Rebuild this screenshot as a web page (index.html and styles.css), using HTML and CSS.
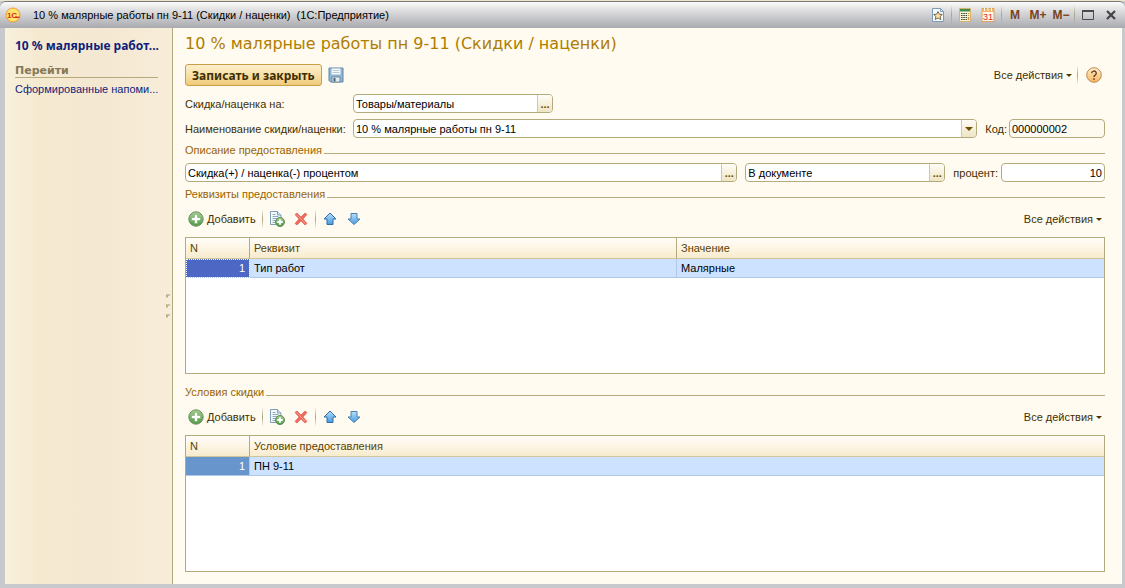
FILE: index.html
```html
<!DOCTYPE html>
<html lang="ru">
<head>
    <meta charset="UTF-8">
    <meta name="viewport" content="width=device-width, initial-scale=1.0">
    <title>10 % малярные работы пн 9-11 (Скидки / наценки)</title>
    <link rel="stylesheet" href="styles.css">
</head>
<body>

    <!-- shared icons -->
    <svg class="sprite" aria-hidden="true">
        <defs>
            <linearGradient id="green" x1="0" y1="0" x2="0" y2="1">
                <stop offset="0" stop-color="#a5cf93"/>
                <stop offset="1" stop-color="#4c9a45"/>
            </linearGradient>
            <linearGradient id="blue" x1="0" y1="0" x2="0" y2="1">
                <stop offset="0" stop-color="#b4e0fb"/>
                <stop offset="1" stop-color="#4a9ade"/>
            </linearGradient>
            <linearGradient id="orange" x1="0" y1="0" x2="0" y2="1">
                <stop offset="0" stop-color="#fff0cf"/>
                <stop offset="1" stop-color="#f7b55c"/>
            </linearGradient>
        </defs>
        <symbol id="icon-add" viewBox="0 0 16 16">
            <circle cx="8" cy="8" r="7.2" fill="url(#green)" stroke="#6d8f62"/>
            <path d="M6.5 3.5h3v3h3v3h-3v3h-3v-3h-3v-3h3z" fill="#fff" stroke="#6aa05d" stroke-width=".5"/>
        </symbol>
        <symbol id="icon-copy" viewBox="0 0 16 16">
            <path d="M1.5 .5h7l3.5 3.5v9.5h-10.5z" fill="#f4f9fd" stroke="#7f9db5"/>
            <path d="M8.5 .5v3.5h3.5" fill="#d4e5f2" stroke="#7f9db5"/>
            <path d="M3.5 3.5h3M3.5 5.5h6M3.5 7.5h6M3.5 9.5h4M3.5 11.5h3" stroke="#8fa9bd"/>
            <circle cx="11" cy="11" r="4.5" fill="url(#green)" stroke="#5f8a55"/>
            <path d="M11 8.3v5.4M8.3 11h5.4" stroke="#fff" stroke-width="1.8"/>
        </symbol>
        <symbol id="icon-delete" viewBox="0 0 16 16">
            <path d="M2 3.5L4 2l4 4 4-4 2 1.500-4 4.500 4 4.500-2 1.500-4-4-4 4-2-1.500 4-4.500z" fill="#ee6a5c" stroke="#d8564b" stroke-width=".6"/>
            <path d="M3.5 3.5l9 9" stroke="#f9a89b" stroke-width=".8"/>
        </symbol>
        <symbol id="icon-up" viewBox="0 0 16 16">
            <path d="M8 2l6 6h-3v5.500h-6v-5.500h-3z" fill="url(#blue)" stroke="#2f6ea8" stroke-linejoin="round"/>
        </symbol>
        <symbol id="icon-down" viewBox="0 0 16 16">
            <path d="M8 13.500l6-5.500h-3v-5.500h-6v5.500h-3z" fill="url(#blue)" stroke="#4a7fb0" stroke-linejoin="round"/>
        </symbol>
    </svg>

    <div class="window">
        <header class="titlebar">
            <svg class="logo" viewBox="0 0 16 16" aria-hidden="true">
                <circle cx="8" cy="8" r="7" fill="#ffe36b" stroke="#ee9a3a"/>
                <text x="7" y="11" class="mark">1C</text>
                <path d="M10 10.300h4.500" stroke="#d7261e" stroke-width="1.300"/>
            </svg>
            <span class="caption">10 % малярные работы пн 9-11 (Скидки / наценки)&nbsp; (1С:Предприятие)</span>
            <div class="tools">
                <button class="tool" aria-label="Избранное">
                    <svg viewBox="0 0 16 16">
                        <path d="M2.500 1.500h8l3 3v10h-11z" fill="#f5fafd" stroke="#7d9ab8"/>
                        <path d="M10.500 1.500v3h3" fill="none" stroke="#7d9ab8"/>
                        <path d="M8 4.500l1.300 2.700 3 .3-2.200 2 .7 3L8 11l-2.800 1.500.7-3-2.200-2 3-.3z" fill="#ffe3a3" stroke="#6b5a45" stroke-width=".9"/>
                    </svg>
                </button>
                <span class="line"></span>
                <button class="tool" aria-label="Калькулятор">
                    <svg viewBox="0 0 16 16">
                        <path d="M2.500 1.500h11v13h-11z" fill="#fbf3d6" stroke="#d4b46f"/>
                        <path d="M3 2h10v2.500H3z" fill="#3f8c4b"/>
                        <path d="M4 6.500h6M4 8.500h6M4 10.500h6M4 12.500h6" stroke="#3c4c3c" stroke-width="1.200" stroke-dasharray="1.600 .7"/>
                        <path d="M11.500 6v1M11.500 8v1M11.500 10v3" stroke="#e08c2c" stroke-width="1.400"/>
                    </svg>
                </button>
                <button class="tool" aria-label="Календарь">
                    <svg viewBox="0 0 16 16">
                        <path d="M2 1.500h12v13H2z" fill="#fff8ea" stroke="#d9a35a"/>
                        <path d="M2 2h12v3H2z" fill="#f2b66b"/>
                        <path d="M4.500 1v3M8 1v3M11.500 1v3" stroke="#fff"/>
                        <text x="8" y="13" class="day">31</text>
                    </svg>
                </button>
                <span class="line"></span>
                <button class="tool memory">M</button>
                <button class="tool memory">M+</button>
                <button class="tool memory">M−</button>
                <span class="line"></span>
                <button class="tool" aria-label="Развернуть">
                    <svg viewBox="0 0 16 16">
                        <path d="M2.500 3.500h11v9h-11z" fill="none" stroke="#4b4b4b"/>
                        <path d="M2 4h12" stroke="#4b4b4b" stroke-width="2"/>
                    </svg>
                </button>
                <button class="tool" aria-label="Закрыть">
                    <svg viewBox="0 0 16 16">
                        <path d="M4 4l8 8M12 4l-8 8" stroke="#444" stroke-width="2.200"/>
                    </svg>
                </button>
            </div>
        </header>

        <div class="client">
            <nav class="sidebar">
                <a href="#" class="current">10 % малярные работ...</a>
                <h2>Перейти</h2>
                <a href="#">Сформированные напоми...</a>
                <div class="grip"><i></i><i></i><i></i></div>
            </nav>

            <main class="form">
                <h1>10 % малярные работы пн 9-11 (Скидки / наценки)</h1>

                <div class="commands">
                    <button class="primary">Записать и закрыть</button>
                    <button class="icon-button" aria-label="Записать">
                        <svg viewBox="0 0 16 16">
                            <path d="M1 1h14v14H2.500L1 13.500z" fill="#8fb6d2" stroke="#6584a0"/>
                            <path d="M3.500 1.500h9v6h-9z" fill="#f5fafc"/>
                            <path d="M4.500 3.500h7M4.500 5.500h7" stroke="#b5cbd8"/>
                            <path d="M4 10h8v5H4z" fill="#e4ebee" stroke="#587289" stroke-width=".7"/>
                            <path d="M5.500 11h2v3.500h-2z" fill="#47627c"/>
                        </svg>
                    </button>
                    <button class="actions">Все действия<b class="caret"></b></button>
                    <span class="line"></span>
                    <button class="icon-button" aria-label="Справка">
                        <svg viewBox="0 0 16 16">
                            <circle cx="8" cy="8" r="7.300" fill="url(#orange)" stroke="#c08a55"/>
                            <path d="M5.700 6.300a2.300 2.200 0 1 1 3.500 1.800Q8 8.800 8 10M8 11.300v1.600" fill="none" stroke="#6b3d22" stroke-width="1.400"/>
                        </svg>
                    </button>
                </div>

                <div class="row">
                    <label class="wide" for="target">Скидка/наценка на:</label>
                    <div class="field short">
                        <input id="target" type="text" value="Товары/материалы">
                        <button class="pick" aria-label="Выбрать">...</button>
                    </div>
                </div>

                <div class="row">
                    <label class="wide" for="name">Наименование скидки/наценки:</label>
                    <div class="field">
                        <input id="name" type="text" value="10 % малярные работы пн 9-11">
                        <button class="pick" aria-label="Открыть список"><b class="caret big"></b></button>
                    </div>
                    <label for="code">Код:</label>
                    <div class="field code">
                        <input id="code" type="text" value="000000002" readonly>
                    </div>
                </div>

                <h3>Описание предоставления</h3>

                <div class="row">
                    <div class="field">
                        <input type="text" aria-label="Способ предоставления" value="Скидка(+) / наценка(-) процентом">
                        <button class="pick" aria-label="Выбрать">...</button>
                    </div>
                    <div class="field short">
                        <input type="text" aria-label="Область" value="В документе">
                        <button class="pick" aria-label="Выбрать">...</button>
                    </div>
                    <label for="percent">процент:</label>
                    <div class="field percent">
                        <input id="percent" type="text" value="10">
                    </div>
                </div>

                <h3>Реквизиты предоставления</h3>

                <div class="toolbar">
                    <button class="add"><svg><use href="#icon-add"/></svg>Добавить</button>
                    <span class="line"></span>
                    <button aria-label="Скопировать"><svg><use href="#icon-copy"/></svg></button>
                    <button aria-label="Удалить"><svg><use href="#icon-delete"/></svg></button>
                    <span class="line"></span>
                    <button aria-label="Вверх"><svg><use href="#icon-up"/></svg></button>
                    <button aria-label="Вниз"><svg><use href="#icon-down"/></svg></button>
                    <button class="actions">Все действия<b class="caret"></b></button>
                </div>

                <div class="list">
                    <table>
                        <thead>
                            <tr><th class="num">N</th><th>Реквизит</th><th>Значение</th></tr>
                        </thead>
                        <tbody>
                            <tr><td class="num focused">1</td><td>Тип работ</td><td>Малярные</td></tr>
                        </tbody>
                    </table>
                </div>

                <h3 class="spaced">Условия скидки</h3>

                <div class="toolbar">
                    <button class="add"><svg><use href="#icon-add"/></svg>Добавить</button>
                    <span class="line"></span>
                    <button aria-label="Скопировать"><svg><use href="#icon-copy"/></svg></button>
                    <button aria-label="Удалить"><svg><use href="#icon-delete"/></svg></button>
                    <span class="line"></span>
                    <button aria-label="Вверх"><svg><use href="#icon-up"/></svg></button>
                    <button aria-label="Вниз"><svg><use href="#icon-down"/></svg></button>
                    <button class="actions">Все действия<b class="caret"></b></button>
                </div>

                <div class="list">
                    <table>
                        <thead>
                            <tr><th class="num">N</th><th>Условие предоставления</th></tr>
                        </thead>
                        <tbody>
                            <tr><td class="num">1</td><td>ПН 9-11</td></tr>
                        </tbody>
                    </table>
                </div>
            </main>
        </div>
    </div>

</body>
</html>
```
FILE: styles.css
```css
* {
    margin: 0;
    padding: 0;
    box-sizing: border-box;
}

body {
    font-family: "Liberation Sans", Arial, sans-serif;
    font-size: 11px;
    color: #3f2f00;
    background-color: #c8c9cc;
}

button {
    font: inherit;
    color: inherit;
    background: none;
    border: none;
    cursor: pointer;
}

svg {
    display: block;
    width: 16px;
    height: 16px;
    flex: none;
}

.sprite {
    position: absolute;
    width: 0;
    height: 0;
}

.window {
    display: flex;
    flex-direction: column;
    min-height: 100vh;
    padding: 0 3px 4px 5px;
    border-top: 1px solid #efe6cc;
}

/* title bar */
.titlebar {
    display: flex;
    align-items: center;
    height: 27px;
    margin: 0 -3px 0 -5px;
    padding: 0 3px 0 5px;
    border-top: 1px solid #77787c;
    border-radius: 6px 6px 0 0;
    background: linear-gradient(#fbfbfb, #dcdcde 35%, #a9aaaf);
}

.logo {
    margin-right: 12px;
}

.mark {
    font-size: 8px;
    font-weight: bold;
    fill: #d7261e;
    text-anchor: middle;
}

.caption {
    flex: 1;
    color: #000;
    white-space: nowrap;
}

.tools {
    display: flex;
    align-items: center;
    gap: 1px;
}

.tool {
    display: flex;
    align-items: center;
    justify-content: center;
    width: 22px;
    height: 20px;
}

.tools .line {
    margin: 0 1px;
}

.memory {
    font-size: 12px;
    font-weight: bold;
    color: #7a4320;
}

.day {
    font-size: 9px;
    fill: #e02a1c;
    text-anchor: middle;
}

.line {
    width: 1px;
    height: 18px;
    margin: 0 2px;
    background: linear-gradient(rgba(160, 150, 110, 0.1), #a8a486, rgba(160, 150, 110, 0.1));
}

.client {
    flex: 1;
    display: flex;
}

/* sidebar */
.sidebar {
    position: relative;
    width: 168px;
    padding: 10px 14px 0 10px;
    border-right: 1px solid #b3ab7d;
    background: linear-gradient(to right, #f9f1dd, #f5e9d0 20%, #f5e8d3 60%, #f7edd8);
}

.sidebar a {
    display: block;
    line-height: 16px;
    color: #0f1f7a;
    text-decoration: none;
    white-space: nowrap;
}

.sidebar .current {
    font-family: "Noto Sans", Tahoma, sans-serif;
    font-size: 12px;
    font-weight: bold;
}

.sidebar h2 {
    margin: 11px 0 3px;
    font-family: "DejaVu Sans", Verdana, sans-serif;
    font-size: 11px;
    line-height: 12px;
    color: #857858;
    border-bottom: 1px solid #b3ab7d;
}

.grip {
    position: absolute;
    right: 2px;
    top: 50%;
    display: grid;
    gap: 7px;
    transform: translateY(-50%);
}

.grip i {
    width: 4px;
    height: 3px;
    border-top: 1px solid #a39b74;
    border-left: 2px solid #b8b08a;
}

/* form */
.form {
    flex: 1;
    display: flex;
    flex-direction: column;
    min-width: 0;
    padding: 6px 17px 12px 12px;
    background-color: #fffbf0;
}

h1 {
    font-family: "DejaVu Sans", Verdana, sans-serif;
    font-size: 16px;
    font-weight: normal;
    line-height: 20px;
    color: #b07d00;
    white-space: nowrap;
}

.commands {
    display: flex;
    align-items: center;
    gap: 3px;
    margin: 10px 0 8px;
}

.primary {
    height: 22px;
    padding: 0 6px;
    font-family: "Noto Sans", Tahoma, sans-serif;
    font-size: 12px;
    font-weight: bold;
    border: 1px solid #c99f4a;
    border-radius: 3px;
    background: linear-gradient(#fdf0cd, #f6dda0 60%, #efc979);
}

.icon-button {
    padding: 0 3px;
}

.actions {
    display: flex;
    align-items: center;
    gap: 3px;
    margin-left: auto;
    white-space: nowrap;
}

.caret {
    border: 3px solid transparent;
    border-top-color: #4a3800;
    border-bottom: none;
}

.caret.big {
    border-width: 4px;
    border-bottom: none;
    border-top-color: #6b4e00;
}

.row {
    display: flex;
    align-items: center;
    gap: 8px;
    margin-bottom: 6px;
    white-space: nowrap;
}

.row .wide {
    width: 160px;
}

.field {
    flex: 1;
    display: flex;
    min-width: 0;
    height: 19px;
    border: 1px solid #b3ab7d;
    border-radius: 4px;
    background-color: #fff;
    overflow: hidden;
}

.field input {
    flex: 1;
    min-width: 0;
    padding: 0 2px;
    font: inherit;
    color: #000;
    background: none;
    border: none;
    outline: none;
}

.field.short {
    flex: 0 0 200px;
}

.field.code {
    flex: 0 0 96px;
    margin-left: -6px;
    background-color: #fffaf0;
}

.field.percent {
    flex: 0 0 104px;
    margin-left: -5px;
}

.percent input {
    text-align: right;
}

.pick {
    display: flex;
    align-items: center;
    justify-content: center;
    width: 15px;
    font-weight: bold;
    color: #6b4e00;
    border-left: 1px solid #cfc9a6;
    background: linear-gradient(#fffdf6, #efe5c4);
}

/* group headings with a rule to the right */
h3 {
    display: flex;
    align-items: center;
    gap: 2px;
    margin-bottom: 7px;
    font-size: 11px;
    font-weight: normal;
    line-height: 12px;
    color: #996300;
    white-space: nowrap;
}

h3::after {
    content: "";
    flex: 1;
    height: 1px;
    margin-top: 6px;
    background-color: #b3ab7d;
}

h3.spaced {
    margin-top: 12px;
}

.toolbar {
    display: flex;
    align-items: center;
    height: 20px;
    margin: 2px 0 8px;
}

.toolbar button {
    padding: 0 4px;
}

.toolbar .actions {
    padding: 0 3px;
}

.toolbar .add {
    display: flex;
    align-items: center;
    gap: 3px;
    padding: 0 4px 0 3px;
}

/* tables */
.list {
    flex: 1;
    border: 1px solid #b3ab7d;
    background-color: #fff;
}

table {
    width: 100%;
    table-layout: fixed;
    border-collapse: separate;
    border-spacing: 0;
}

th {
    height: 21px;
    padding: 0 4px;
    font-weight: normal;
    text-align: left;
    color: #5a4300;
    border-bottom: 1px solid #cfc49a;
    border-right: 1px solid #b3ab7d;
    background: linear-gradient(#fffdfa, #fdf5e4 50%, #f8ebcd);
}

td {
    height: 19px;
    padding: 0 4px;
    color: #000;
    border-bottom: 1px solid #afc8ea;
    border-right: 1px solid #afc8ea;
    background-color: #cde2ff;
}

th:last-child,
td:last-child {
    border-right: none;
}

.num {
    width: 64px;
}

td.num {
    text-align: right;
    color: #fff;
    background-color: #6896cc;
}

td.focused {
    background-color: #4c68c4;
    outline: 1px dotted #fff;
    outline-offset: -1px;
}
```
